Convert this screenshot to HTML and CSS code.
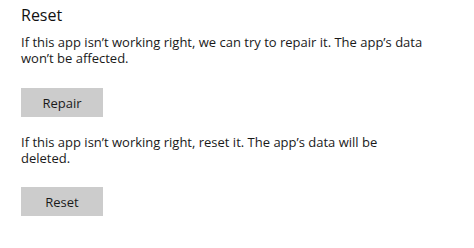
FILE: index.html
```html
<!DOCTYPE html>
<html>
<head>
<meta charset="utf-8">
<link rel="stylesheet" href="styles.css">
</head>
<body>
<div class="panel">
  <h2 class="title">Reset</h2>
  <p class="desc">If this app isn’t working right, we can try to repair it. The app’s data won’t be affected.</p>
  <button class="btn btn-repair">Repair</button>
  <p class="desc desc-second">If this app isn’t working right, reset it. The app’s data will be deleted.</p>
  <button class="btn btn-reset">Reset</button>
</div>
</body>
</html>
```
FILE: styles.css
```css
html, body {
  margin: 0;
  padding: 0;
  background: #ffffff;
}
.panel {
  padding: 5px 0 0 21px;
  width: 406px;
  font-family: "Open Sans", "Noto Sans", sans-serif;
  color: #1a1a1a;
  display: flex;
  flex-direction: column;
  align-items: flex-start;
}
.title {
  margin: 0;
  font-size: 16px;
  line-height: 20px;
  font-weight: 400;
  color: #111;
}
.desc {
  margin: 9px 0 0 0;
  font-size: 13px;
  line-height: 16px;
}
.desc-second {
  margin-top: 17px;
}
.btn {
  margin-top: 22px;
  width: 82px;
  height: 29px;
  border: none;
  background: #cccccc;
  font-family: inherit;
  font-size: 13px;
  color: #1a1a1a;
  padding: 0;
}
.btn-reset {
  margin-top: 21px;
}
```
